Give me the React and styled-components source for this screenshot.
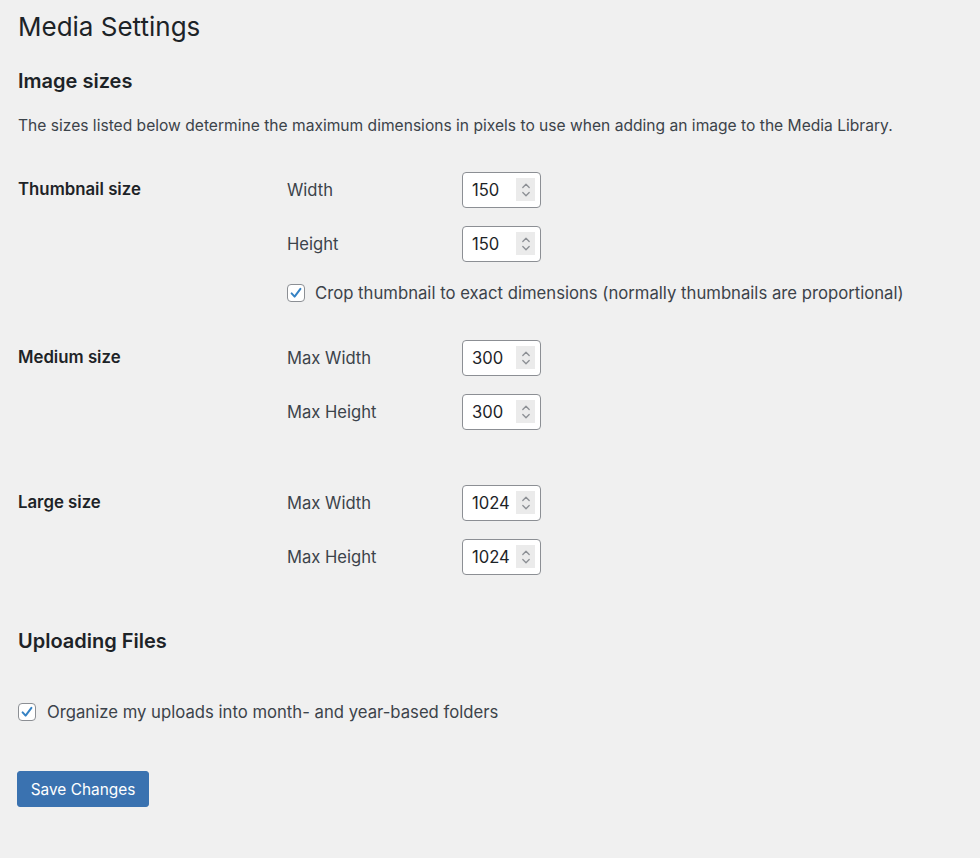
import React from "react";
import styled, { createGlobalStyle } from "styled-components";

const GlobalStyle = createGlobalStyle`
  html, body {
    margin: 0;
    padding: 0;
    background: #f0f0f0;
  }
  body {
    font-family: Inter, "Noto Sans", "Liberation Sans", sans-serif;
    color: #3c434a;
    min-height: 858px;
  }
`;

const imageSizes = [
  {
    title: "Thumbnail size",
    top: 34,
    fields: [
      { label: "Width", value: "150" },
      { label: "Height", value: "150" },
    ],
    crop: "Crop thumbnail to exact dimensions (normally thumbnails are proportional)",
  },
  {
    title: "Medium size",
    top: 35,
    fields: [
      { label: "Max Width", value: "300" },
      { label: "Max Height", value: "300" },
    ],
  },
  {
    title: "Large size",
    top: 56,
    fields: [
      { label: "Max Width", value: "1024" },
      { label: "Max Height", value: "1024" },
    ],
  },
];

const Spinner = () => (
  <StyledSpinner>
    <svg width="10" height="18" viewBox="0 0 10 18" fill="none">
      <path d="M1.8 6.5 L5 3.3 L8.2 6.5" stroke="#8c8f94" strokeWidth="1.3" strokeLinecap="round" strokeLinejoin="round" />
      <path d="M1.8 11.5 L5 14.7 L8.2 11.5" stroke="#8c8f94" strokeWidth="1.3" strokeLinecap="round" strokeLinejoin="round" />
    </svg>
  </StyledSpinner>
);

const CheckBox = () => (
  <StyledCheck>
    <svg width="14" height="14" viewBox="0 0 14 14" fill="none">
      <path d="M2.6 7.4 L5.6 10.6 L11.4 2.8" stroke="#3582c4" strokeWidth="2" strokeLinecap="round" strokeLinejoin="round" />
    </svg>
  </StyledCheck>
);

const NumberBox = ({ value }) => (
  <StyledNumberBox>
    <StyledNumberInput type="text" defaultValue={value} />
    <Spinner />
  </StyledNumberBox>
);

const SizeSection = ({ title, top, fields, crop }) => (
  <StyledSection $top={top}>
    <StyledSectionTitle>{title}</StyledSectionTitle>
    <StyledFields>
      {fields.map((f) => (
        <StyledFieldRow key={f.label}>
          <StyledFieldLabel>{f.label}</StyledFieldLabel>
          <NumberBox value={f.value} />
        </StyledFieldRow>
      ))}
      {crop && (
        <StyledCheckRow $top={1}>
          <CheckBox />
          <span>{crop}</span>
        </StyledCheckRow>
      )}
    </StyledFields>
  </StyledSection>
);

const App = () => {
  return (
    <StyledPage>
      <GlobalStyle />
      <StyledTitle>Media Settings</StyledTitle>
      <StyledHeading $top={24}>Image sizes</StyledHeading>
      <StyledDescription>
        The sizes listed below determine the maximum dimensions in pixels to use when adding an image to the Media Library.
      </StyledDescription>

      {imageSizes.map((s) => (
        <SizeSection key={s.title} {...s} />
      ))}

      <StyledHeading $top={54}>Uploading Files</StyledHeading>
      <StyledCheckRow $top={46} $gap={11}>
        <CheckBox />
        <span>Organize my uploads into month- and year-based folders</span>
      </StyledCheckRow>

      <StyledButton type="button">Save Changes</StyledButton>
    </StyledPage>
  );
};

const StyledPage = styled.div`
  padding: 10px 18px 40px 18px;
`;

const StyledTitle = styled.h1`
  margin: 0;
  font-size: 26px;
  line-height: 34px;
  font-weight: 400;
  color: #1d2327;
`;

const StyledHeading = styled.h2`
  margin: ${(p) => p.$top}px 0 0 0;
  font-size: 20px;
  line-height: 26px;
  font-weight: 600;
  color: #1d2327;
`;

const StyledDescription = styled.p`
  margin: 20px 0 0 0;
  font-size: 15.6px;
  line-height: 24px;
`;

const StyledSection = styled.div`
  display: grid;
  grid-template-columns: 269px 1fr;
  margin-top: ${(p) => p.$top}px;
`;

const StyledSectionTitle = styled.div`
  font-size: 16.8px;
  font-weight: 600;
  color: #1d2327;
  line-height: 35px;
`;

const StyledFields = styled.div`
  display: flex;
  flex-direction: column;
  gap: 19px;
`;

const StyledFieldRow = styled.div`
  display: flex;
  align-items: center;
  height: 35px;
`;

const StyledFieldLabel = styled.label`
  width: 175px;
  font-size: 16.6px;
`;

const StyledNumberBox = styled.div`
  display: flex;
  align-items: center;
  box-sizing: border-box;
  width: 79px;
  height: 36px;
  padding: 0 5px 0 9px;
  background: #fff;
  border: 1px solid #8c8f94;
  border-radius: 4px;
`;

const StyledNumberInput = styled.input`
  flex: 1;
  min-width: 0;
  border: none;
  outline: none;
  padding: 0;
  background: transparent;
  font-family: inherit;
  font-size: 16.6px;
  color: #1d2327;
`;

const StyledSpinner = styled.span`
  display: flex;
  align-items: center;
  justify-content: center;
  width: 19px;
  height: 23px;
  background: #ebebeb;
`;

const StyledCheckRow = styled.div`
  display: flex;
  align-items: center;
  gap: ${(p) => p.$gap || 10}px;
  margin-top: ${(p) => p.$top}px;
  font-size: 16.7px;
  line-height: 24px;
`;

const StyledCheck = styled.span`
  display: flex;
  align-items: center;
  justify-content: center;
  box-sizing: border-box;
  width: 18px;
  height: 18px;
  background: #fff;
  border: 1px solid #8c8f94;
  border-radius: 4px;
`;

const StyledButton = styled.button`
  display: block;
  margin-top: 47px;
  margin-left: -1px;
  width: 132px;
  height: 36px;
  padding: 0;
  background: #3a72b0;
  border: 1px solid #3a72b0;
  border-radius: 3px;
  color: #fff;
  font-family: inherit;
  font-size: 15.4px;
  cursor: pointer;
`;

export default App;
